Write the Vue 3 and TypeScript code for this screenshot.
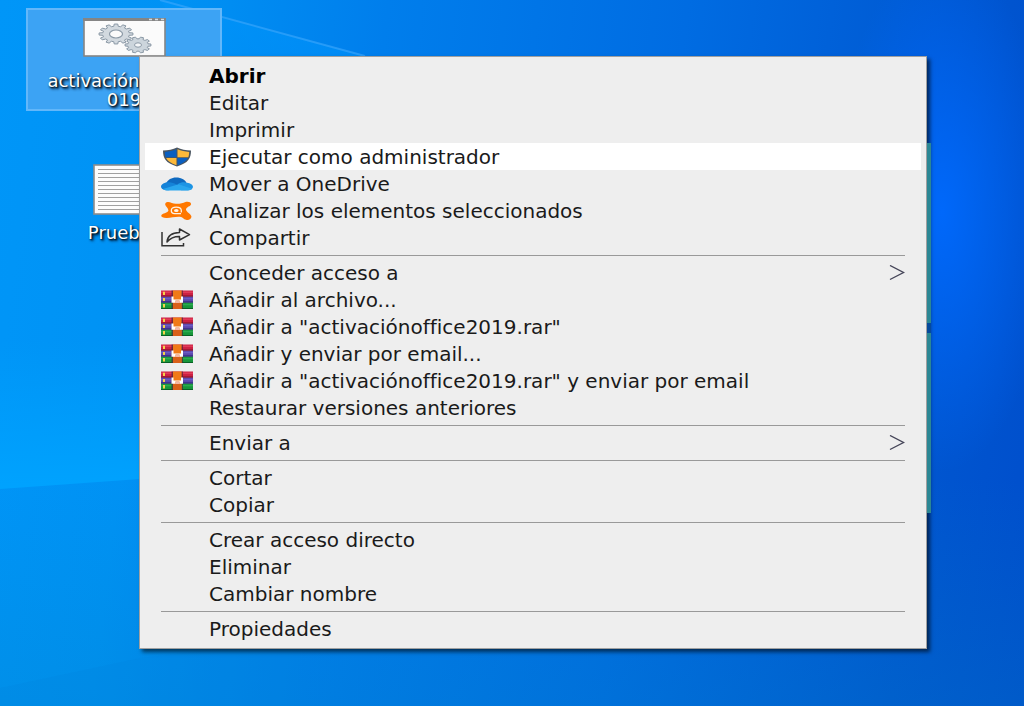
<script setup lang="ts">
type IconName = 'shield' | 'cloud' | 'avast' | 'share' | 'rar'

interface MenuItem {
  label: string
  icon?: IconName
  bold?: boolean
  active?: boolean
  submenu?: boolean
}

const groups: MenuItem[][] = [
  [
    { label: 'Abrir', bold: true },
    { label: 'Editar' },
    { label: 'Imprimir' },
    { label: 'Ejecutar como administrador', icon: 'shield', active: true },
    { label: 'Mover a OneDrive', icon: 'cloud' },
    { label: 'Analizar los elementos seleccionados', icon: 'avast' },
    { label: 'Compartir', icon: 'share' },
  ],
  [
    { label: 'Conceder acceso a', submenu: true },
    { label: 'Añadir al archivo...', icon: 'rar' },
    { label: 'Añadir a "activaciónoffice2019.rar"', icon: 'rar' },
    { label: 'Añadir y enviar por email...', icon: 'rar' },
    { label: 'Añadir a "activaciónoffice2019.rar" y enviar por email', icon: 'rar' },
    { label: 'Restaurar versiones anteriores' },
  ],
  [{ label: 'Enviar a', submenu: true }],
  [{ label: 'Cortar' }, { label: 'Copiar' }],
  [{ label: 'Crear acceso directo' }, { label: 'Eliminar' }, { label: 'Cambiar nombre' }],
  [{ label: 'Propiedades' }],
]

function gear(cx: number, cy: number, rx: number, ry: number, teeth: number): string {
  const points: string[] = []
  const step = (Math.PI * 2) / teeth
  const profile: [number, number][] = [
    [-0.32, 0.78],
    [-0.2, 1],
    [0.2, 1],
    [0.32, 0.78],
  ]
  for (let i = 0; i < teeth; i++) {
    for (const [offset, radius] of profile) {
      const a = (i + offset) * step
      points.push(`${(cx + Math.cos(a) * rx * radius).toFixed(2)} ${(cy + Math.sin(a) * ry * radius).toFixed(2)}`)
    }
  }
  return `M${points.join('L')}Z`
}

const bigGear = gear(33, 16, 17, 10, 12)
const smallGear = gear(55, 27, 13, 8, 10)
</script>

<template>
  <main class="desktop">
    <svg class="wallpaper" viewBox="0 0 1024 706" preserveAspectRatio="none" aria-hidden="true">
      <defs>
        <linearGradient id="ray-top" x1="0" y1="1" x2="1" y2="0">
          <stop offset="0" stop-color="#0098ff" stop-opacity="0.1" />
          <stop offset="1" stop-color="#0098ff" stop-opacity="0.6" />
        </linearGradient>
        <linearGradient id="ray-left" x1="0" y1="0" x2="0" y2="1">
          <stop offset="0" stop-color="#00a4ff" stop-opacity="0" />
          <stop offset="1" stop-color="#00a4ff" stop-opacity="0.9" />
        </linearGradient>
        <linearGradient id="floor" x1="0" y1="0" x2="0" y2="1">
          <stop offset="0" stop-color="#0080c0" stop-opacity="0" />
          <stop offset="1" stop-color="#0080c0" stop-opacity="0.25" />
        </linearGradient>
      </defs>
      <path d="M160 0 L365 56 L365 90 L222 90 Z" fill="url(#ray-top)" />
      <path d="M160 0 L365 56" stroke="#3fa8fb" stroke-width="2" stroke-opacity="0.6" />
      <path d="M0 340 L140 340 L140 479 L0 489 Z" fill="url(#ray-left)" />
      <path d="M0 489 L140 479 H1024 V706 H0 Z" fill="url(#floor)" />
      <path d="M0 688 L140 658 L300 640 V706 H0 Z" fill="#0084e0" fill-opacity="0.25" />
    </svg>

    <div class="shortcuts">
      <button class="shortcut selected" type="button">
        <svg class="app-icon" viewBox="0 0 83 39" aria-hidden="true">
          <rect x="1" y="1" width="81" height="37" fill="#fbfbfb" stroke="#858585" stroke-width="1.6" />
          <rect x="0" y="0" width="83" height="3" fill="#858585" />
          <path d="M66 1.500h3M72 1.500h3M78 1.500h3" stroke="#d5dbe0" stroke-width="1.6" />
          <path :d="bigGear" fill="#d2d9df" stroke="#8a98a5" stroke-width="1" />
          <ellipse cx="33" cy="16" rx="6.5" ry="4" fill="#fbfbfb" stroke="#8a98a5" stroke-width="1.2" />
          <path :d="smallGear" fill="#ccd5dc" stroke="#8a98a5" stroke-width="1" />
          <ellipse cx="55" cy="27" rx="3.5" ry="2.2" fill="#f4f6f8" stroke="#8a98a5" stroke-width="1" />
        </svg>
        <span class="caption">activaciónoffice2<br />019</span>
      </button>
      <button class="shortcut" type="button">
        <svg class="doc-icon" viewBox="0 0 62 51" aria-hidden="true">
          <rect x="1" y="1" width="60" height="49" fill="#fcfcfc" stroke="#8d8d8d" stroke-width="1.6" />
          <path
            d="M5 5.500h52M5 9.500h52M5 13.500h52M5 17.500h52M5 21.500h52M5 25.500h52M5 29.500h52M5 33.500h52M5 37.500h52M5 41.500h52M5 45.500h52"
            stroke="#a0a0a0" stroke-width="1.2"
          />
        </svg>
        <span class="caption">Pruebas</span>
      </button>
    </div>

    <div class="menu" role="menu">
      <template v-for="(group, g) in groups" :key="g">
        <hr v-if="g > 0" class="divider" />
        <button
          v-for="item in group"
          :key="item.label"
          type="button"
          role="menuitem"
          class="item"
          :class="{ bold: item.bold, active: item.active }"
        >
          <span class="icon">
            <svg v-if="item.icon === 'shield'" viewBox="0 0 32 20" aria-hidden="true">
              <path d="M16 0.500C12 2.500 7 3.500 2 3.500C2 11 4.500 16 16 19.500C27.500 16 30 11 30 3.500C25 3.500 20 2.500 16 0.500Z" fill="#4a5560" />
              <path d="M15.500 2.300C12 3.900 8 4.700 3.800 4.900C3.900 7 4.100 8.800 4.700 10.300H15.500Z" fill="#0a5fc0" />
              <path d="M16.500 2.300C20 3.900 24 4.700 28.200 4.900C28.100 7 27.900 8.800 27.300 10.300H16.500Z" fill="#fdb93a" />
              <path d="M5.100 11H15.500V18.200C10 16.400 6.700 14 5.100 11Z" fill="#fdb93a" />
              <path d="M26.900 11H16.500V18.200C22 16.400 25.300 14 26.900 11Z" fill="#0a5fc0" />
            </svg>
            <svg v-else-if="item.icon === 'cloud'" viewBox="0 0 32 20" aria-hidden="true">
              <path d="M5 9.500C7 5 12 2.800 17 3.600C21 4.200 24 6 25.500 8.500L19 13L5 11Z" fill="#0f6ac0" />
              <path d="M0 12.500C0 10 4 8 8.500 8.200C12 8.400 15 10 19 12L8 16.200H5C2 16 0 14.500 0 12.500Z" fill="#1583d8" />
              <path d="M17 10C19.500 8 23.500 7.600 26 8.800C29.500 9.200 32 11 32 13C31.800 15 29.500 16.300 27 16.300H20Z" fill="#1d94e4" />
              <path d="M2 15L17.500 10.200L31 14.800C30 16 28.500 16.400 27 16.400H6C4 16.400 2.800 15.800 2 15Z" fill="#2aa6ee" />
            </svg>
            <svg v-else-if="item.icon === 'avast'" viewBox="0 0 32 20" aria-hidden="true">
              <path
                d="M6.500 1C9 0.500 11.500 2.800 15 2.800C19 2.900 22 2.300 24.500 1C27.500 0.300 30.500 1.400 30 3.500C29.500 5.300 25.500 5.800 25 8.200C24.700 10.500 29.500 12.500 30.300 15C31 18 28 19.500 25 18.800C22.500 18.200 22 16.200 19 15.700C15 15.300 10 16.800 6 17C2 17.200-0.500 15.800 0.500 14C1.500 12.300 6 12.300 7.200 10C8.200 7.600 4.500 6 4.200 3.600C4 2.100 5 1.300 6.500 1Z"
                fill="#ff7800"
              />
              <path d="M20 12.600H13.500C11.300 12.600 10.300 11.300 10.300 9.500C10.300 7.400 12 6.200 15.200 6.200C18.700 6.200 20.300 7.500 20.300 9.500V11.500" fill="none" stroke="#fff4e8" stroke-width="1.300" />
              <ellipse cx="15.300" cy="9.500" rx="2.300" ry="1.500" fill="#fff4e8" />
            </svg>
            <svg v-else-if="item.icon === 'share'" viewBox="0 0 32 20" aria-hidden="true">
              <path d="M1 4V17.800H22.500V15" fill="none" stroke="#333" stroke-width="1.500" />
              <path d="M6 14C6.500 8.500 10.500 4.800 18.500 4.600V1L28.500 6.600L18.500 12V8.600C12.500 8.500 9 10.500 6 14Z" fill="none" stroke="#333" stroke-width="1.500" stroke-linejoin="round" />
            </svg>
            <svg v-else-if="item.icon === 'rar'" viewBox="0 0 32 20" aria-hidden="true">
              <rect y="0.500" width="32" height="6" fill="#cc2143" />
              <rect y="1.500" width="32" height="1.500" fill="#e03a58" />
              <rect y="5.500" width="32" height="1.300" fill="#7d102d" />
              <rect y="6.800" width="32" height="5.500" fill="#5b48ad" />
              <rect y="7.800" width="32" height="1.500" fill="#6c5bc4" />
              <rect y="11.500" width="32" height="1.300" fill="#272070" />
              <rect y="12.800" width="32" height="6.200" fill="#17963a" />
              <rect y="13.800" width="32" height="1.500" fill="#2bab4f" />
              <rect y="18" width="32" height="1" fill="#096124" />
              <path d="M10.500 0.500H12V19H10.500ZM20.500 0.500H22V19H20.500Z" fill="#4b2537" opacity="0.7" />
              <rect x="12" y="0.500" width="8.500" height="18.500" fill="#f07a17" />
              <rect x="12" y="13" width="8.500" height="6" fill="#d9601a" />
              <path d="M10.500 6.500H12.500V9.500H20V6.500H22V12.800H18.500V10.500H14.500V12.800H10.500Z" fill="#fff" />
              <rect x="14.500" y="10.500" width="4" height="2.500" fill="#f3b8a8" />
              <path d="M2 1.800H4V5H2ZM2 8H4V11H2ZM2 14H4V17.500H2Z" fill="#f5d44a" />
            </svg>
          </span>
          <span class="label">{{ item.label }}</span>
          <svg v-if="item.submenu" class="chevron" viewBox="0 0 16 16" aria-hidden="true">
            <path d="M1 0.500L14.500 7.500L1 14.500" fill="none" stroke="#454558" stroke-width="1.400" />
          </svg>
        </button>
      </template>
    </div>

    <div class="backdrop-window" aria-hidden="true"><i></i><i></i></div>
  </main>
</template>

<style scoped>
.desktop {
  position: relative;
  min-height: 100vh;
  overflow: hidden;
  font-family: 'DejaVu Sans', 'Noto Sans', sans-serif;
  font-variant-ligatures: none;
  background:
    radial-gradient(ellipse 110px 260px at 92% 30%, rgba(0, 106, 255, 0.9), rgba(0, 100, 255, 0)),
    linear-gradient(97deg, #0096f8 0%, #0092f4 16%, #007eec 35%, #006ce2 62%, #0056d0 88%, #004ecc 100%);
}

.wallpaper {
  position: absolute;
  inset: 0;
  width: 100%;
  height: 100%;
}

.shortcuts {
  position: relative;
  display: flex;
  flex-direction: column;
  gap: 48px;
  width: 196px;
  margin-left: 26px;
  padding-top: 8px;
}

.shortcut {
  display: flex;
  flex-direction: column;
  align-items: center;
  gap: 8px;
  padding: 4px 0 0;
  border: 1px solid transparent;
  background: none;
  color: #fff;
  font: inherit;
  white-space: nowrap;
}

.shortcut.selected {
  gap: 14px;
  padding: 8px 0 0;
  border: 2px solid #62b7fa;
  background: #3ca3f4;
}

.app-icon {
  width: 83px;
  height: 39px;
}

.doc-icon {
  width: 62px;
  height: 51px;
}

.caption {
  font-size: 18px;
  line-height: 19px;
  text-shadow: 1px 1px 2px #000, 2px 2px 3px #001a3a;
}

.backdrop-window {
  position: absolute;
  top: 143px;
  left: calc(139px + 77vw);
  display: flex;
  flex-direction: column;
  gap: 10px;
  width: 4px;
  background: #064a9c;
}

.backdrop-window i {
  height: 180px;
  background: #2b8794;
}

.menu {
  position: absolute;
  top: 56px;
  left: 139px;
  display: flex;
  flex-direction: column;
  box-sizing: border-box;
  width: 77vw;
  padding: 5px 5px 6px;
  border: 1px solid #a0a0a0;
  background: #eee;
  box-shadow: 3px 3px 4px rgba(0, 0, 0, 0.6);
}

.item {
  display: flex;
  align-items: center;
  gap: 16px;
  height: 27px;
  padding: 0 16px;
  border: 0;
  background: none;
  color: #1a1a1a;
  font: inherit;
  font-size: 20px;
  line-height: 24px;
  text-align: left;
  white-space: nowrap;
}

.item.bold {
  color: #000;
  font-weight: 700;
}

.item.active {
  background: #fff;
}

.icon {
  flex: none;
  width: 32px;
  height: 20px;
}

.icon svg {
  display: block;
  width: 32px;
  height: 20px;
}

.label {
  flex: 1;
}

.chevron {
  width: 16px;
  height: 16px;
}

.divider {
  width: calc(100% - 32px);
  height: 1px;
  margin: 4px 16px 3px;
  border: 0;
  background: #999;
}
</style>

<style>
body {
  margin: 0;
}
</style>
